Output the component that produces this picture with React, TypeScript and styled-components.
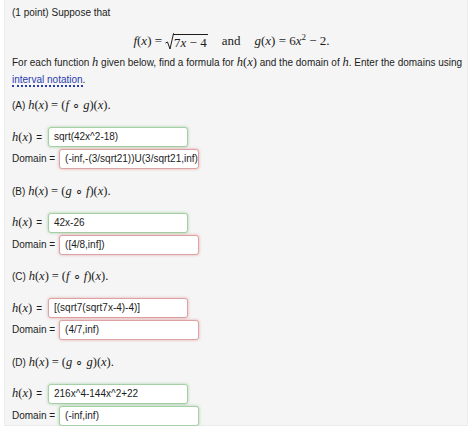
import React from 'react';
import styled, { createGlobalStyle } from 'styled-components';

const GlobalStyle = createGlobalStyle`
  body {
    margin: 0;
    background: #ffffff;
    font-family: "Liberation Sans", Arial, sans-serif;
    color: #1c1c1c;
  }
`;

const Panel = styled.div`
  margin: 0 6px 0 4px;
  height: 426px;
  box-sizing: border-box;
  background: #f5f5f5;
  border: 1px solid #ebebeb;
  border-top: none;
  padding: 4px 2px 0 7px;
  font-size: 10px;
  line-height: 16px;
`;

const Para = styled.div<{ $top?: number }>`
  margin-top: ${p => p.$top ?? 0}px;
  line-height: 17px;
  white-space: nowrap;
`;

const Display = styled.div`
  margin-top: 9px;
  height: 22px;
  display: flex;
  justify-content: center;
  align-items: center;
  font-family: "Liberation Serif", "Times New Roman", serif;
  font-size: 13px;
  padding-right: 14px;
  white-space: nowrap;
`;

const M = styled.span`
  font-family: "Liberation Serif", "Times New Roman", serif;
  font-size: 12.5px;
`;

const V = styled.i`
  font-family: "Liberation Serif", "Times New Roman", serif;
  font-style: italic;
`;

const Root = styled.span`
  display: inline-flex;
  align-items: flex-end;
  margin-left: 3px;
`;

const Surd = styled.svg`
  width: 9px;
  height: 17px;
  margin-right: -1px;
`;

const Radicand = styled.span`
  border-top: 1px solid #1c1c1c;
  line-height: 15px;
  padding: 0 1px 0 1px;
`;

const Gap = styled.span`
  display: inline-block;
  width: 14px;
`;

const Sup = styled.sup`
  font-size: 9px;
  line-height: 0;
`;

const Link = styled.span`
  color: #2b3cb0;
  border-bottom: 2px dotted #2b3cb0;
`;

const Section = styled.div<{ $top: number }>`
  margin-top: ${p => p.$top}px;
`;

const Heading = styled.div`
  line-height: 16px;
  white-space: nowrap;
`;

const Rows = styled.div`
  margin-top: 13px;
  display: flex;
  flex-direction: column;
  gap: 2px;
`;

const Row = styled.div`
  display: flex;
  align-items: center;
  gap: 4px;
`;

const Label = styled.span<{ $extra?: number }>`
  white-space: nowrap;
  margin-right: ${p => p.$extra ?? 0}px;
`;

const Eq = styled.span`
  margin-left: 4px;
`;

const Field = styled.div<{ $ok: boolean }>`
  width: 140px;
  height: 20px;
  box-sizing: border-box;
  background: #ffffff;
  border: 1px solid ${p => (p.$ok ? '#a5cfa5' : '#dba3a3')};
  border-radius: 3px;
  box-shadow: 0 0 3px ${p => (p.$ok ? 'rgba(90,170,90,0.5)' : 'rgba(215,100,100,0.5)')};
  padding: 0 4px 0 5px;
  display: flex;
  align-items: center;
  font-family: "Liberation Sans", Arial, sans-serif;
  font-size: 10px;
  white-space: nowrap;
  overflow: hidden;
`;

const H = () => (
  <M>
    <V>h</V>(<V>x</V>)
  </M>
);

type Part = { letter: string; a: string; b: string; f1: string; ok1: boolean; f2: string; ok2: boolean };

const parts: Part[] = [
  { letter: 'A', a: 'f', b: 'g', f1: 'sqrt(42x^2-18)', ok1: true, f2: '(-inf,-(3/sqrt21))U(3/sqrt21,inf)', ok2: false },
  { letter: 'B', a: 'g', b: 'f', f1: '42x-26', ok1: true, f2: '([4/8,inf])', ok2: false },
  { letter: 'C', a: 'f', b: 'f', f1: '[(sqrt7(sqrt7x-4)-4)]', ok1: false, f2: '(4/7,inf)', ok2: false },
  { letter: 'D', a: 'g', b: 'g', f1: '216x^4-144x^2+22', ok1: true, f2: '(-inf,inf)', ok2: true },
];

export default function App() {
  return (
    <>
      <GlobalStyle />
      <Panel>
        <Para>(1 point) Suppose that</Para>
        <Display>
          <span>
            <V>f</V>(<V>x</V>) =
          </span>
          <Root>
            <Surd viewBox="0 0 9 17">
              <polyline points="0.5,10 2.5,9 5,16 8.5,0.5 9,0.5" fill="none" stroke="#1c1c1c" strokeWidth="1" />
            </Surd>
            <Radicand>
              7<V>x</V> − 4
            </Radicand>
          </Root>
          <Gap />
          and
          <Gap />
          <span>
            <V>g</V>(<V>x</V>) = 6<V>x</V>
            <Sup>2</Sup> − 2.
          </span>
        </Display>
        <Para $top={2}>
          For each function <M><V>h</V></M> given below, find a formula for <H /> and the domain of{' '}
          <M><V>h</V></M>. Enter the domains using
        </Para>
        <Para>
          <Link>interval notation</Link>.
        </Para>
        {parts.map((p, i) => (
          <Section key={p.letter} $top={i === 0 ? 9 : 13.5}>
            <Heading>
              ({p.letter}) <H />{' '}
              <M>
                = (<V>{p.a}</V> ∘ <V>{p.b}</V>)(<V>x</V>).
              </M>
            </Heading>
            <Rows>
              <Row>
                <Label $extra={2}>
                  <H />
                  <Eq>=</Eq>
                </Label>
                <Field $ok={p.ok1}>{p.f1}</Field>
              </Row>
              <Row>
                <Label>Domain =</Label>
                <Field $ok={p.ok2}>{p.f2}</Field>
              </Row>
            </Rows>
          </Section>
        ))}
      </Panel>
    </>
  );
}
